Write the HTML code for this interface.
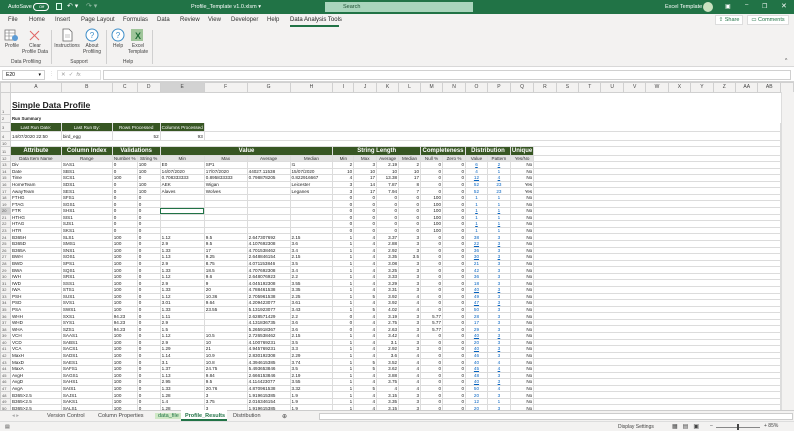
<!DOCTYPE html>
<html><head><meta charset="utf-8"><style>
*{margin:0;padding:0;box-sizing:border-box}
body{width:794px;height:431px;overflow:hidden;background:#fff;font-family:"Liberation Sans",Arial,sans-serif;position:relative}
.abs{position:absolute}
#tb{left:0;top:0;width:794px;height:14px;background:#217346;color:#fff;font-size:5.5px}
#menu{left:0;top:14px;width:794px;height:13px;background:#f3f2f1;font-size:6px;color:#333}
#menu span{position:absolute;top:3px}
#rib{left:0;top:27px;width:794px;height:40px;background:#f3f2f1;border-bottom:1px solid #d8d8d8;font-size:5px;color:#444}
.lbl{position:absolute;text-align:center;line-height:6px}
.sep{position:absolute;top:3px;width:1px;height:34px;background:#d0d0d0}
#fb{left:0;top:67px;width:794px;height:15px;background:#fff;border-bottom:1px solid #d4d4d4}
table{position:absolute;left:0;top:82px;border-collapse:collapse;table-layout:fixed;font-size:4.6px;color:#222}
td{border:1px solid #dcdcdc;overflow:hidden;white-space:nowrap;padding:0 1px;line-height:5px}
tr.h td{background:#f3f2f1;text-align:center;color:#444;font-size:5px;height:10px;border-color:#d0d0d0}
td.n{background:#f3f2f1;text-align:left;color:#555;font-size:4px;padding:0 0 0 1px;border-color:#d0d0d0}
.d td{height:6.58px}
.r{text-align:right}
.c{text-align:center}
.g{background:#375623;color:#fff;font-weight:bold;text-align:center}
.s{background:#e2e2e2;text-align:center;color:#333}
.u{color:#0563c1;text-decoration:underline;text-align:center}
#tabs{left:0;top:410px;width:794px;height:11px;background:#f3f2f1;border-top:1px solid #ccc;font-size:5.5px;color:#444}
#tabs span{position:absolute;top:2px}
#st{left:0;top:421px;width:794px;height:10px;background:#f3f2f1;border-top:1px solid #ddd;font-size:5px;color:#444}
</style></head><body>
<div id="tb" class="abs">
<span class="abs" style="left:8px;top:4px">AutoSave</span>
<span class="abs" style="left:33px;top:3px;width:16px;height:8px;border:1px solid #fff;border-radius:4px;font-size:4px;padding-left:5px;line-height:6px">Off</span>
<span class="abs" style="left:56px;top:3px;width:6px;height:7px;border:1px solid #dfe;"></span>
<span class="abs" style="left:67px;top:2px;font-size:7px">↶ ▾</span>
<span class="abs" style="left:86px;top:2px;font-size:7px;opacity:.5">↷ ▾</span>
<span class="abs" style="left:191px;top:4px">Profile_Template v1.0.xlsm ▾</span>
<div class="abs" style="left:325px;top:2px;width:148px;height:10px;background:#a9d5bc;color:#1d4d31;padding-left:18px;line-height:10px">Search</div>
<span class="abs" style="left:665px;top:4px">Excel Template</span>
<span class="abs" style="left:703px;top:2px;width:10px;height:10px;border-radius:50%;background:#c9e2c0"></span>
<span class="abs" style="left:725px;top:3px;font-size:6px">▣</span>
<span class="abs" style="left:745px;top:2px;font-size:6px">–</span>
<span class="abs" style="left:762px;top:3px;font-size:6px">❐</span>
<span class="abs" style="left:781px;top:2px;font-size:7px">✕</span>
</div>
<div id="menu" class="abs">
<span style="left:8px">File</span><span style="left:29px">Home</span><span style="left:55px">Insert</span><span style="left:81px">Page Layout</span><span style="left:123px">Formulas</span><span style="left:157px">Data</span><span style="left:180px">Review</span><span style="left:208px">View</span><span style="left:231px">Developer</span><span style="left:267px">Help</span>
<span style="left:290px;color:#222">Data Analysis Tools</span>
<div class="abs" style="left:290px;top:11px;width:49px;height:2px;background:#217346"></div>
<div class="abs" style="left:715px;top:1px;width:28px;height:10px;background:#fff;border:1px solid #ddd;font-size:5.5px;line-height:8px;text-align:center;color:#217346">⇪ Share</div>
<div class="abs" style="left:747px;top:1px;width:42px;height:10px;background:#fff;border:1px solid #ddd;font-size:5.5px;line-height:8px;text-align:center;color:#217346">▭ Comments</div>
</div>
<div id="rib" class="abs">
<svg class="abs" style="left:4px;top:2px" width="15" height="13"><rect x="1" y="1" width="10" height="10" fill="#fff" stroke="#777" stroke-width=".8"/><path d="M1 4h10M1 7h10M5 1v10" stroke="#777" stroke-width=".6"/><circle cx="11" cy="9" r="3" fill="#5b9bd5"/></svg>
<svg class="abs" style="left:28px;top:2px" width="13" height="13"><path d="M2 2l9 9M11 2l-9 9" stroke="#e06666" stroke-width="1"/></svg>
<svg class="abs" style="left:61px;top:1px" width="12" height="14"><path d="M2 1h6l3 3v9H2z" fill="#fff" stroke="#666" stroke-width=".8"/><path d="M4 7h5M4 9h5" stroke="#888" stroke-width=".5"/></svg>
<svg class="abs" style="left:85px;top:1px" width="14" height="14"><circle cx="7" cy="7" r="6" fill="#fff" stroke="#3c8dc8" stroke-width="1"/><text x="7" y="10" font-size="8" text-anchor="middle" fill="#3c8dc8" font-family="Liberation Sans">?</text></svg>
<svg class="abs" style="left:111px;top:1px" width="14" height="14"><circle cx="7" cy="7" r="6" fill="#fff" stroke="#3c8dc8" stroke-width="1"/><text x="7" y="10" font-size="8" text-anchor="middle" fill="#3c8dc8" font-family="Liberation Sans">?</text></svg>
<svg class="abs" style="left:130px;top:1px" width="14" height="14"><rect x="1" y="1" width="12" height="12" fill="#9fc59a"/><text x="5" y="11" font-size="9" font-weight="bold" fill="#1e6b35" font-family="Liberation Sans">X</text></svg>
<div class="lbl" style="left:2px;top:16px;width:20px">Profile</div>
<div class="lbl" style="left:20px;top:16px;width:30px">Clear<br>Profile Data</div>
<div class="lbl" style="left:52px;top:16px;width:30px">Instructions</div>
<div class="lbl" style="left:80px;top:16px;width:24px">About<br>Profiling</div>
<div class="lbl" style="left:108px;top:16px;width:20px">Help</div>
<div class="lbl" style="left:127px;top:16px;width:22px">Excel<br>Template</div>
<div class="lbl" style="left:2px;top:32px;width:48px">Data Profiling</div>
<div class="lbl" style="left:55px;top:32px;width:48px">Support</div>
<div class="lbl" style="left:110px;top:32px;width:36px">Help</div>
<div class="sep" style="left:51px"></div><div class="sep" style="left:106px"></div><div class="sep" style="left:152px"></div>
<span class="abs" style="left:785px;top:31px;font-size:5px">^</span>
</div>
<div id="fb" class="abs">
<div class="abs" style="left:2px;top:3px;width:43px;height:10px;border:1px solid #d0d0d0;font-size:5px;line-height:8px;padding-left:3px">E20<span style="position:absolute;right:3px">▾</span></div>
<span class="abs" style="left:49px;top:4px;font-size:5px;color:#aaa">⋮</span>
<div class="abs" style="left:57px;top:3px;width:44px;height:10px;border:1px solid #e0e0e0;font-size:5.5px;color:#999;line-height:8px">&nbsp;&nbsp;✕&nbsp;&nbsp;✓&nbsp;&nbsp;<i>f</i>x</div>
<div class="abs" style="left:103px;top:3px;width:688px;height:10px;border:1px solid #d0d0d0"></div>
</div>
<table>
<colgroup><col style="width:10px"><col style="width:51px"><col style="width:51px"><col style="width:25px"><col style="width:23px"><col style="width:43px"><col style="width:43px"><col style="width:43px"><col style="width:43px"><col style="width:21px"><col style="width:23px"><col style="width:22px"><col style="width:22px"><col style="width:22px"><col style="width:23px"><col style="width:22px"><col style="width:23px"><col style="width:22px"><col style="width:22.6px"><col style="width:22.6px"><col style="width:22.6px"><col style="width:22.6px"><col style="width:22.6px"><col style="width:22.6px"><col style="width:22.6px"><col style="width:22.6px"><col style="width:22.6px"><col style="width:22.6px"><col style="width:22.6px"><col style="width:13px"></colgroup>
<tr class="h"><td></td><td>A</td><td>B</td><td>C</td><td>D</td><td style="background:#d2d2d2">E</td><td>F</td><td>G</td><td>H</td><td>I</td><td>J</td><td>K</td><td>L</td><td>M</td><td>N</td><td>O</td><td>P</td><td>Q</td><td>R</td><td>S</td><td>T</td><td>U</td><td>V</td><td>W</td><td>X</td><td>Y</td><td>Z</td><td>AA</td><td>AB</td><td></td></tr>
<tr style="height:22px"><td class="n" style="vertical-align:bottom">1</td><td colspan="5" style="border-color:#fff;font-size:8.6px;font-weight:bold;text-decoration:underline;vertical-align:bottom;line-height:11px;padding-bottom:3px;overflow:visible">Simple Data Profile</td><td colspan="23" style="border-color:#fff"></td><td></td></tr>
<tr style="height:8px"><td class="n">2</td><td style="font-weight:bold;font-size:4.3px;border-color:#fff">Run Summary</td><td colspan="27" style="border-color:#fff"></td><td></td></tr>
<tr style="height:9px"><td class="n">3</td><td class="g" style="font-weight:normal">Last Run Date:</td><td class="g" style="font-weight:normal">Last Run By:</td><td class="g" colspan="2" style="font-weight:normal">Rows Processed</td><td class="g" style="font-weight:normal">Columns Processed</td><td colspan="23"></td><td></td></tr>
<tr style="height:9px"><td class="n">4</td><td>14/07/2020 22:50</td><td>bird_egg</td><td colspan="2" class="r">52</td><td class="r">93</td><td colspan="23"></td><td></td></tr>
<tr style="height:5px"><td class="n">10</td><td colspan="28"></td><td></td></tr>
<tr style="height:9px;font-size:6px"><td class="n">11</td><td class="g">Attribute</td><td class="g">Column Index</td><td class="g" colspan="2">Validations</td><td class="g" colspan="4">Value</td><td class="g" colspan="4">String Length</td><td class="g" colspan="2">Completeness</td><td class="g" colspan="2">Distribution</td><td class="g">Unique</td><td colspan="11"></td><td></td></tr>
<tr style="height:6px"><td class="n">12</td><td class="s">Data Item Name</td><td class="s">Range</td><td class="s">Number %</td><td class="s">String %</td><td class="s">Min</td><td class="s">Max</td><td class="s">Average</td><td class="s">Median</td><td class="s">Min</td><td class="s">Max</td><td class="s">Average</td><td class="s">Median</td><td class="s">Null %</td><td class="s">Zero %</td><td class="s">Value</td><td class="s">Pattern</td><td class="s">Yes/No</td><td colspan="11"></td><td></td></tr>
<tbody class="d">
<tr><td class="n">13</td><td>Div</td><td>SAS1</td><td>0</td><td>100</td><td>E0</td><td>SP1</td><td></td><td>I1</td><td class="r">2</td><td class="r">3</td><td class="r">2.19</td><td class="r">2</td><td class="r">0</td><td class="r">0</td><td class="u">6</td><td class="u">2</td><td class="r">No</td><td colspan="11"></td><td></td></tr>
<tr><td class="n">14</td><td>Date</td><td>SBS1</td><td>0</td><td>100</td><td>14/07/2020</td><td>17/07/2020</td><td>44027.11538</td><td>15/07/2020</td><td class="r">10</td><td class="r">10</td><td class="r">10</td><td class="r">10</td><td class="r">0</td><td class="r">0</td><td class="u">4</td><td class="u">1</td><td class="r">No</td><td colspan="11"></td><td></td></tr>
<tr><td class="n">15</td><td>Time</td><td>SCS1</td><td>100</td><td>0</td><td>0.708333333</td><td>0.895833333</td><td>0.798878205</td><td>0.822916667</td><td class="r">4</td><td class="r">17</td><td class="r">13.38</td><td class="r">17</td><td class="r">0</td><td class="r">0</td><td class="u">12</td><td class="u">4</td><td class="r">No</td><td colspan="11"></td><td></td></tr>
<tr><td class="n">16</td><td>HomeTeam</td><td>SDS1</td><td>0</td><td>100</td><td>AEK</td><td>Wigan</td><td></td><td>Leicester</td><td class="r">3</td><td class="r">14</td><td class="r">7.87</td><td class="r">8</td><td class="r">0</td><td class="r">0</td><td class="u">52</td><td class="u">23</td><td class="r">Yes</td><td colspan="11"></td><td></td></tr>
<tr><td class="n">17</td><td>AwayTeam</td><td>SES1</td><td>0</td><td>100</td><td>Alaves</td><td>Wolves</td><td></td><td>Leganes</td><td class="r">3</td><td class="r">17</td><td class="r">7.94</td><td class="r">7</td><td class="r">0</td><td class="r">0</td><td class="u">52</td><td class="u">23</td><td class="r">Yes</td><td colspan="11"></td><td></td></tr>
<tr><td class="n">18</td><td>FTHG</td><td>SFS1</td><td>0</td><td>0</td><td></td><td></td><td></td><td></td><td class="r">0</td><td class="r">0</td><td class="r">0</td><td class="r">0</td><td class="r">100</td><td class="r">0</td><td class="u">1</td><td class="u">1</td><td class="r">No</td><td colspan="11"></td><td></td></tr>
<tr><td class="n">19</td><td>FTAG</td><td>SGS1</td><td>0</td><td>0</td><td></td><td></td><td></td><td></td><td class="r">0</td><td class="r">0</td><td class="r">0</td><td class="r">0</td><td class="r">100</td><td class="r">0</td><td class="u">1</td><td class="u">1</td><td class="r">No</td><td colspan="11"></td><td></td></tr>
<tr><td class="n" style="background:#d2d2d2">20</td><td>FTR</td><td>SHS1</td><td>0</td><td>0</td><td style="outline:1.5px solid #217346;outline-offset:-1px"></td><td></td><td></td><td></td><td class="r">0</td><td class="r">0</td><td class="r">0</td><td class="r">0</td><td class="r">100</td><td class="r">0</td><td class="u">1</td><td class="u">1</td><td class="r">No</td><td colspan="11"></td><td></td></tr>
<tr><td class="n">21</td><td>HTHG</td><td>SIS1</td><td>0</td><td>0</td><td></td><td></td><td></td><td></td><td class="r">0</td><td class="r">0</td><td class="r">0</td><td class="r">0</td><td class="r">100</td><td class="r">0</td><td class="u">1</td><td class="u">1</td><td class="r">No</td><td colspan="11"></td><td></td></tr>
<tr><td class="n">22</td><td>HTAG</td><td>SJS1</td><td>0</td><td>0</td><td></td><td></td><td></td><td></td><td class="r">0</td><td class="r">0</td><td class="r">0</td><td class="r">0</td><td class="r">100</td><td class="r">0</td><td class="u">1</td><td class="u">1</td><td class="r">No</td><td colspan="11"></td><td></td></tr>
<tr><td class="n">23</td><td>HTR</td><td>SKS1</td><td>0</td><td>0</td><td></td><td></td><td></td><td></td><td class="r">0</td><td class="r">0</td><td class="r">0</td><td class="r">0</td><td class="r">100</td><td class="r">0</td><td class="u">1</td><td class="u">1</td><td class="r">No</td><td colspan="11"></td><td></td></tr>
<tr><td class="n">24</td><td>B365H</td><td>SLS1</td><td>100</td><td>0</td><td>1.12</td><td>9.5</td><td>2.647307692</td><td>2.15</td><td class="r">1</td><td class="r">4</td><td class="r">3.37</td><td class="r">3</td><td class="r">0</td><td class="r">0</td><td class="u">38</td><td class="u">3</td><td class="r">No</td><td colspan="11"></td><td></td></tr>
<tr><td class="n">25</td><td>B365D</td><td>SMS1</td><td>100</td><td>0</td><td>2.9</td><td>9.5</td><td>4.107692308</td><td>3.6</td><td class="r">1</td><td class="r">4</td><td class="r">2.88</td><td class="r">3</td><td class="r">0</td><td class="r">0</td><td class="u">22</td><td class="u">3</td><td class="r">No</td><td colspan="11"></td><td></td></tr>
<tr><td class="n">26</td><td>B365A</td><td>SNS1</td><td>100</td><td>0</td><td>1.33</td><td>17</td><td>4.701538462</td><td>3.4</td><td class="r">1</td><td class="r">4</td><td class="r">2.92</td><td class="r">3</td><td class="r">0</td><td class="r">0</td><td class="u">36</td><td class="u">3</td><td class="r">No</td><td colspan="11"></td><td></td></tr>
<tr><td class="n">27</td><td>BWH</td><td>SOS1</td><td>100</td><td>0</td><td>1.13</td><td>9.25</td><td>2.648846154</td><td>2.15</td><td class="r">1</td><td class="r">4</td><td class="r">3.35</td><td class="r">3.5</td><td class="r">0</td><td class="r">0</td><td class="u">30</td><td class="u">3</td><td class="r">No</td><td colspan="11"></td><td></td></tr>
<tr><td class="n">28</td><td>BWD</td><td>SPS1</td><td>100</td><td>0</td><td>2.9</td><td>8.75</td><td>4.071153846</td><td>3.5</td><td class="r">1</td><td class="r">4</td><td class="r">3.08</td><td class="r">3</td><td class="r">0</td><td class="r">0</td><td class="u">21</td><td class="u">3</td><td class="r">No</td><td colspan="11"></td><td></td></tr>
<tr><td class="n">29</td><td>BWA</td><td>SQS1</td><td>100</td><td>0</td><td>1.33</td><td>18.5</td><td>4.707692308</td><td>3.4</td><td class="r">1</td><td class="r">4</td><td class="r">3.25</td><td class="r">3</td><td class="r">0</td><td class="r">0</td><td class="u">42</td><td class="u">3</td><td class="r">No</td><td colspan="11"></td><td></td></tr>
<tr><td class="n">30</td><td>IWH</td><td>SRS1</td><td>100</td><td>0</td><td>1.12</td><td>9.6</td><td>2.648076923</td><td>2.2</td><td class="r">1</td><td class="r">4</td><td class="r">3.33</td><td class="r">3</td><td class="r">0</td><td class="r">0</td><td class="u">36</td><td class="u">3</td><td class="r">No</td><td colspan="11"></td><td></td></tr>
<tr><td class="n">31</td><td>IWD</td><td>SSS1</td><td>100</td><td>0</td><td>2.9</td><td>9</td><td>4.045192308</td><td>3.55</td><td class="r">1</td><td class="r">4</td><td class="r">3.29</td><td class="r">3</td><td class="r">0</td><td class="r">0</td><td class="u">18</td><td class="u">3</td><td class="r">No</td><td colspan="11"></td><td></td></tr>
<tr><td class="n">32</td><td>IWA</td><td>STS1</td><td>100</td><td>0</td><td>1.33</td><td>20</td><td>4.788461538</td><td>3.35</td><td class="r">1</td><td class="r">4</td><td class="r">3.31</td><td class="r">3</td><td class="r">0</td><td class="r">0</td><td class="u">40</td><td class="u">3</td><td class="r">No</td><td colspan="11"></td><td></td></tr>
<tr><td class="n">33</td><td>PSH</td><td>SUS1</td><td>100</td><td>0</td><td>1.12</td><td>10.36</td><td>2.705961538</td><td>2.25</td><td class="r">1</td><td class="r">5</td><td class="r">3.92</td><td class="r">4</td><td class="r">0</td><td class="r">0</td><td class="u">49</td><td class="u">3</td><td class="r">No</td><td colspan="11"></td><td></td></tr>
<tr><td class="n">34</td><td>PSD</td><td>SVS1</td><td>100</td><td>0</td><td>3.01</td><td>9.64</td><td>4.209423077</td><td>3.61</td><td class="r">1</td><td class="r">4</td><td class="r">3.92</td><td class="r">4</td><td class="r">0</td><td class="r">0</td><td class="u">47</td><td class="u">3</td><td class="r">No</td><td colspan="11"></td><td></td></tr>
<tr><td class="n">35</td><td>PSA</td><td>SWS1</td><td>100</td><td>0</td><td>1.33</td><td>23.55</td><td>5.131923077</td><td>3.43</td><td class="r">1</td><td class="r">5</td><td class="r">4.02</td><td class="r">4</td><td class="r">0</td><td class="r">0</td><td class="u">50</td><td class="u">3</td><td class="r">No</td><td colspan="11"></td><td></td></tr>
<tr><td class="n">36</td><td>WHH</td><td>SXS1</td><td>94.23</td><td>0</td><td>1.11</td><td></td><td>2.628571429</td><td>2.2</td><td class="r">0</td><td class="r">4</td><td class="r">3.19</td><td class="r">3</td><td class="r">5.77</td><td class="r">0</td><td class="u">28</td><td class="u">3</td><td class="r">No</td><td colspan="11"></td><td></td></tr>
<tr><td class="n">37</td><td>WHD</td><td>SYS1</td><td>94.23</td><td>0</td><td>2.9</td><td></td><td>4.131836735</td><td>3.6</td><td class="r">0</td><td class="r">4</td><td class="r">2.75</td><td class="r">3</td><td class="r">5.77</td><td class="r">0</td><td class="u">17</td><td class="u">3</td><td class="r">No</td><td colspan="11"></td><td></td></tr>
<tr><td class="n">38</td><td>WHA</td><td>SZS1</td><td>94.23</td><td>0</td><td>1.5</td><td></td><td>5.265918367</td><td>3.6</td><td class="r">0</td><td class="r">4</td><td class="r">2.63</td><td class="r">3</td><td class="r">5.77</td><td class="r">0</td><td class="u">29</td><td class="u">3</td><td class="r">No</td><td colspan="11"></td><td></td></tr>
<tr><td class="n">39</td><td>VCH</td><td>SAAS1</td><td>100</td><td>0</td><td>1.12</td><td>10.5</td><td>2.726538462</td><td>2.15</td><td class="r">1</td><td class="r">4</td><td class="r">3.42</td><td class="r">4</td><td class="r">0</td><td class="r">0</td><td class="u">40</td><td class="u">3</td><td class="r">No</td><td colspan="11"></td><td></td></tr>
<tr><td class="n">40</td><td>VCD</td><td>SABS1</td><td>100</td><td>0</td><td>2.9</td><td>10</td><td>4.100769231</td><td>3.5</td><td class="r">1</td><td class="r">4</td><td class="r">3.1</td><td class="r">3</td><td class="r">0</td><td class="r">0</td><td class="u">20</td><td class="u">3</td><td class="r">No</td><td colspan="11"></td><td></td></tr>
<tr><td class="n">41</td><td>VCA</td><td>SACS1</td><td>100</td><td>0</td><td>1.29</td><td>21</td><td>4.945769231</td><td>3.3</td><td class="r">1</td><td class="r">4</td><td class="r">2.92</td><td class="r">3</td><td class="r">0</td><td class="r">0</td><td class="u">40</td><td class="u">3</td><td class="r">No</td><td colspan="11"></td><td></td></tr>
<tr><td class="n">42</td><td>MaxH</td><td>SADS1</td><td>100</td><td>0</td><td>1.14</td><td>10.9</td><td>2.830192308</td><td>2.29</td><td class="r">1</td><td class="r">4</td><td class="r">3.6</td><td class="r">4</td><td class="r">0</td><td class="r">0</td><td class="u">46</td><td class="u">3</td><td class="r">No</td><td colspan="11"></td><td></td></tr>
<tr><td class="n">43</td><td>MaxD</td><td>SAES1</td><td>100</td><td>0</td><td>3.1</td><td>10.8</td><td>4.394615385</td><td>3.74</td><td class="r">1</td><td class="r">5</td><td class="r">3.52</td><td class="r">4</td><td class="r">0</td><td class="r">0</td><td class="u">40</td><td class="u">4</td><td class="r">No</td><td colspan="11"></td><td></td></tr>
<tr><td class="n">44</td><td>MaxA</td><td>SAFS1</td><td>100</td><td>0</td><td>1.37</td><td>24.75</td><td>5.493653846</td><td>3.5</td><td class="r">1</td><td class="r">5</td><td class="r">3.62</td><td class="r">4</td><td class="r">0</td><td class="r">0</td><td class="u">45</td><td class="u">4</td><td class="r">No</td><td colspan="11"></td><td></td></tr>
<tr><td class="n">45</td><td>AvgH</td><td>SAGS1</td><td>100</td><td>0</td><td>1.13</td><td>9.84</td><td>2.666153846</td><td>2.19</td><td class="r">1</td><td class="r">4</td><td class="r">3.88</td><td class="r">4</td><td class="r">0</td><td class="r">0</td><td class="u">48</td><td class="u">3</td><td class="r">No</td><td colspan="11"></td><td></td></tr>
<tr><td class="n">46</td><td>AvgD</td><td>SAHS1</td><td>100</td><td>0</td><td>2.95</td><td>9.5</td><td>4.114423077</td><td>3.55</td><td class="r">1</td><td class="r">4</td><td class="r">3.75</td><td class="r">4</td><td class="r">0</td><td class="r">0</td><td class="u">40</td><td class="u">3</td><td class="r">No</td><td colspan="11"></td><td></td></tr>
<tr><td class="n">47</td><td>AvgA</td><td>SAIS1</td><td>100</td><td>0</td><td>1.33</td><td>20.76</td><td>4.870961538</td><td>3.32</td><td class="r">1</td><td class="r">5</td><td class="r">4</td><td class="r">4</td><td class="r">0</td><td class="r">0</td><td class="u">50</td><td class="u">4</td><td class="r">No</td><td colspan="11"></td><td></td></tr>
<tr><td class="n">48</td><td>B365&gt;2.5</td><td>SAJS1</td><td>100</td><td>0</td><td>1.28</td><td>3</td><td>1.919615385</td><td>1.9</td><td class="r">1</td><td class="r">4</td><td class="r">3.15</td><td class="r">3</td><td class="r">0</td><td class="r">0</td><td class="u">20</td><td class="u">3</td><td class="r">No</td><td colspan="11"></td><td></td></tr>
<tr><td class="n">49</td><td>B365&lt;2.5</td><td>SAKS1</td><td>100</td><td>0</td><td>1.4</td><td>3.75</td><td>2.016346154</td><td>1.9</td><td class="r">1</td><td class="r">4</td><td class="r">3.35</td><td class="r">3</td><td class="r">0</td><td class="r">0</td><td class="u">12</td><td class="u">1</td><td class="r">No</td><td colspan="11"></td><td></td></tr>
<tr><td class="n">50</td><td>B365&gt;2.5</td><td>SALS1</td><td>100</td><td>0</td><td>1.28</td><td>3</td><td>1.919615385</td><td>1.9</td><td class="r">1</td><td class="r">4</td><td class="r">3.15</td><td class="r">3</td><td class="r">0</td><td class="r">0</td><td class="u">20</td><td class="u">3</td><td class="r">No</td><td colspan="11"></td><td></td></tr>
</tbody></table>
<div class="abs" style="left:781px;top:92px;width:13px;height:318px;background:#f3f2f1;border-left:1px solid #ddd"></div>
<div id="tabs" class="abs">
<span style="left:12px;color:#aaa">◂ ▸</span>
<span style="left:47px">Version Control</span>
<span style="left:98px">Column Properties</span>
<span style="left:155px;color:#217346;background:#cfe8c6;padding:0 3px">data_file</span>
<div class="abs" style="left:181px;top:-1px;width:46px;height:11px;background:#fff;border-bottom:2px solid #217346"></div>
<span style="left:185px;color:#217346;font-weight:bold">Profile_Results</span>
<span style="left:233px">Distribution</span>
<span style="left:282px;font-size:6px">⊕</span>
<div class="abs" style="left:319px;top:2px;width:474px;height:7px;background:#fff;border:1px solid #ccc"></div>
</div>
<div id="st" class="abs">
<span class="abs" style="left:5px;top:2px">▤</span>
<span class="abs" style="left:618px;top:2px">Display Settings</span>
<span class="abs" style="left:672px;top:1px;font-size:6px">▦ &nbsp; ▤ &nbsp; ▣</span>
<span class="abs" style="left:710px;top:1px">–</span>
<div class="abs" style="left:716px;top:5px;width:44px;height:1px;background:#888"></div>
<div class="abs" style="left:737px;top:2px;width:2px;height:6px;background:#444"></div>
<span class="abs" style="left:764px;top:1px">+ 85%</span>
</div>
</body></html>
